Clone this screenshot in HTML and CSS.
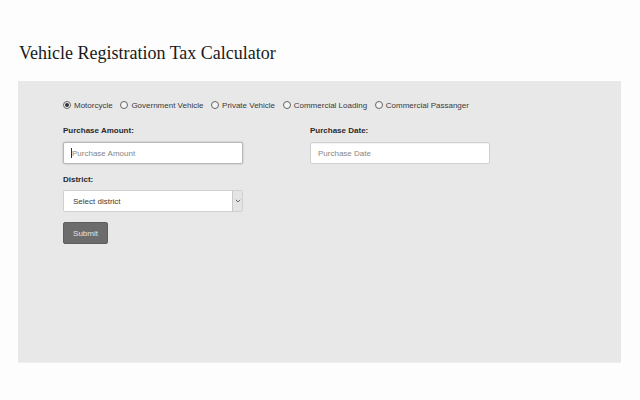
FILE: index.html
```html
<!DOCTYPE html>
<html>
<head>
<meta charset="utf-8">
<link rel="stylesheet" href="styles.css">
</head>
<body>
<div class="page">
  <h1 class="title">Vehicle Registration Tax Calculator</h1>
  <div class="panel">
    <div class="radios">
      <label class="radio"><input type="radio" name="type" checked><span>Motorcycle</span></label>
      <label class="radio"><input type="radio" name="type"><span>Government Vehicle</span></label>
      <label class="radio"><input type="radio" name="type"><span>Private Vehicle</span></label>
      <label class="radio"><input type="radio" name="type"><span>Commercial Loading</span></label>
      <label class="radio"><input type="radio" name="type"><span>Commercial Passanger</span></label>
    </div>
    <div class="grid">
      <div class="field">
        <label class="lbl">Purchase Amount:</label>
        <div class="input focused"><span class="caret"></span><span class="ph">Purchase Amount</span></div>
      </div>
      <div class="field">
        <label class="lbl">Purchase Date:</label>
        <div class="input"><span class="ph">Purchase Date</span></div>
      </div>
      <div class="field district">
        <label class="lbl">District:</label>
        <div class="select"><span class="sel-text">Select district</span><span class="arrow"><svg width="6" height="4" viewBox="0 0 6 4"><path d="M0.8 0.8 L3 3 L5.2 0.8" fill="none" stroke="#666" stroke-width="1"/></svg></span></div>
      </div>
    </div>
    <button class="btn">Submit</button>
  </div>
</div>
</body>
</html>
```
FILE: styles.css
```css
html, body { margin: 0; padding: 0; background: #fdfdfd; }
body { font-family: "Liberation Sans", Arial, sans-serif; color: #333; }
.page { padding: 0 19px 0 18px; }
.title {
  font-family: "Liberation Serif", "Times New Roman", serif;
  font-weight: normal;
  font-size: 18px;
  line-height: 22px;
  color: #1a1a1a;
  margin: 42px 0 17px 1px;
}
.panel {
  background: #e8e8e8;
  width: 603px;
  height: 282px;
  box-sizing: border-box;
  padding: 19px 0 0 45px;
  border-bottom: 1px solid #eee;
}
.radios { display: flex; height: 10px; align-items: center; font-size: 8px; color: #3a3a3a; }
.radio { display: flex; align-items: center; margin-right: 7.7px; }
.radio input {
  appearance: none; -webkit-appearance: none;
  width: 8px; height: 8px; margin: 0 3px 0 0;
  border: 1px solid #666; border-radius: 50%;
  box-sizing: border-box; background: #f4f4f4; position: relative;
}
.radio input:checked::after {
  content: ""; position: absolute; left: 1px; top: 1px;
  width: 4px; height: 4px; border-radius: 50%; background: #333;
}
.grid {
  display: grid;
  grid-template-columns: 180px 180px;
  column-gap: 67px;
  margin-top: 16px;
}
.field { display: flex; flex-direction: column; }
.district { margin-top: 11px; grid-column: 1; }
.lbl { font-size: 8px; font-weight: bold; line-height: 10px; color: #2a2a2a; }
.input, .select {
  height: 22px; box-sizing: border-box;
  background: #fff; border: 1px solid #d0d0d0; border-radius: 2px;
  display: flex; align-items: center;
  font-size: 8px;
}
.input { margin-top: 6px; padding-left: 7px; box-shadow: inset 0 1px 1px rgba(0,0,0,0.06); }
.input.focused { border-color: #b8b8b8; box-shadow: 0 0 2px rgba(0,0,0,0.25); }
.caret { width: 1px; height: 10px; background: #333; }
.ph { color: #858585; }
.select { margin-top: 5px; padding-left: 9px; justify-content: space-between; }
.sel-text { color: #3a3a3a; }
.arrow {
  width: 9px; height: 20px; background: #e4e4e4; border-left: 1px solid #c8c8c8;
  display: flex; align-items: center; justify-content: center;
}
.btn {
  margin-top: 10px;
  width: 45px; height: 22px;
  background: #6c6c6c; color: #e4e4e4;
  border: 1px solid #5e5e5e; border-radius: 2px;
  font-family: "Liberation Sans", Arial, sans-serif; font-size: 8px;
  padding: 0;
}
```
